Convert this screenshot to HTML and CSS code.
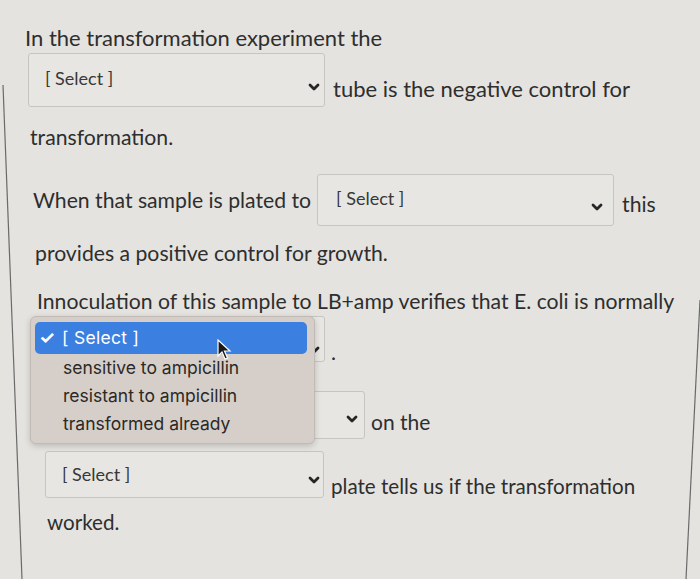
FILE: index.html
```html
<!DOCTYPE html>
<html lang="en">
<head>
    <meta charset="UTF-8">
    <meta name="viewport" content="width=device-width, initial-scale=1.0">
    <title>Transformation Quiz</title>
    <link rel="stylesheet" href="styles.css">
</head>
<body>
    <div class="page">
        <svg class="frame" width="700" height="579" viewBox="0 0 700 579">
            <line x1="3" y1="85" x2="22" y2="579"></line>
            <line x1="700" y1="300" x2="686" y2="579"></line>
        </svg>

        <div class="question">
            <p class="text first">In the transformation experiment the</p>

            <div class="row row-1">
                <div class="select select-1">
                    <span class="label">[ Select ]</span>
                    <svg class="chevron" width="12" height="8" viewBox="0 0 12 8"><polyline points="2,2 6,6 10,2"></polyline></svg>
                </div>
                <span class="text after-1">tube is the negative control for</span>
            </div>

            <p class="text line-2">transformation.</p>

            <div class="row row-2">
                <span class="text">When that sample is plated to</span>
                <div class="select select-2">
                    <span class="label">[ Select ]</span>
                    <svg class="chevron" width="12" height="8" viewBox="0 0 12 8"><polyline points="2,2 6,6 10,2"></polyline></svg>
                </div>
                <span class="text after-2">this</span>
            </div>

            <p class="text line-3">provides a positive control for growth.</p>
            <p class="text line-4">Innoculation of this sample to LB+amp verifies that E. coli is normally</p>

            <div class="row row-3">
                <div class="select-wrap">
                    <!-- the open menu covers this select's label -->
                    <div class="select select-3">
                        <span class="label"></span>
                        <svg class="chevron" width="12" height="8" viewBox="0 0 12 8"><polyline points="2,2 6,6 10,2"></polyline></svg>
                    </div>
                    <div class="menu">
                        <div class="option selected"><span class="check">✓</span>[ Select ]</div>
                        <div class="option">sensitive to ampicillin</div>
                        <div class="option">resistant to ampicillin</div>
                        <div class="option">transformed already</div>
                        <svg class="cursor" width="16" height="22" viewBox="0 0 16 22">
                            <path d="M1 1 L1 17 L5 13 L8 20 L10.5 19 L7.5 12 L13 12 Z"></path>
                        </svg>
                    </div>
                </div>
                <span class="text after-3">.</span>
            </div>

            <div class="row row-4">
                <div class="select select-4">
                    <span class="label"></span>
                    <svg class="chevron" width="12" height="8" viewBox="0 0 12 8"><polyline points="2,2 6,6 10,2"></polyline></svg>
                </div>
                <span class="text after-4">on the</span>
            </div>

            <div class="row row-5">
                <div class="select select-5">
                    <span class="label">[ Select ]</span>
                    <svg class="chevron" width="12" height="8" viewBox="0 0 12 8"><polyline points="2,2 6,6 10,2"></polyline></svg>
                </div>
                <span class="text after-5">plate tells us if the transformation</span>
            </div>

            <p class="text line-6">worked.</p>
        </div>
    </div>
</body>
</html>
```

FILE: styles.css
```css
body {
    margin: 0;
    background-color: #e4e3e0;
    font-family: Lato, "Open Sans", sans-serif;
    color: #2e2e2e;
}
.page {
    position: relative;
    width: 700px;
    height: 579px;
    overflow: hidden;
}
.frame {
    position: absolute;
    top: 0;
    left: 0;
}
.frame line {
    stroke: #6a6a6a;
    stroke-width: 1.2;
}
.question {
    padding: 25px 0 0 25px;
}
.text {
    margin: 0;
    font-size: 21.2px;
    line-height: 26px;
    white-space: nowrap;
}
.first,
.after-1 {
    font-size: 22px;
}
.row {
    display: flex;
    align-items: center;
}

/* inline dropdowns */
.select {
    box-sizing: border-box;
    display: flex;
    justify-content: space-between;
    align-items: flex-start;
    padding: 13px 4px 0 16px;
    background-color: #e7e6e3;
    border: 1px solid #c6c5c1;
    border-radius: 3px;
}
.select .label {
    font-size: 18px;
    line-height: 22px;
    color: #383838;
}
.chevron {
    margin-top: 16px;
}
.chevron polyline {
    fill: none;
    stroke: #262626;
    stroke-width: 2.8;
    stroke-linecap: round;
    stroke-linejoin: round;
}

.row-1 {
    margin: 2px 0 0 3px;
    align-items: flex-end;
}
.select-1 {
    width: 297px;
    height: 54px;
}
.after-1 {
    margin-left: 8px;
    padding-bottom: 5px;
}
.line-2 {
    margin: 17px 0 0 5px;
}
.row-2 {
    margin: 24px 0 0 8px;
}
.select-2 {
    width: 297px;
    height: 52px;
    margin-left: 6px;
    padding: 12px 10px 0 18px;
}
.after-2 {
    margin-left: 8px;
    padding-top: 8px;
}
.line-3 {
    margin: 14px 0 0 10px;
}
.line-4 {
    margin: 22px 0 0 12px;
}
.row-3 {
    margin: 2px 0 0 15px;
    align-items: flex-end;
}
.select-wrap {
    position: relative;
}
.select-3 {
    width: 285px;
    height: 46px;
}
.after-3 {
    margin-left: 6px;
    line-height: 20px;
}
.row-4 {
    margin: 29px 0 0 16px;
    align-items: flex-end;
}
.select-4 {
    width: 324px;
    height: 48px;
    padding-right: 6px;
}
.select-4 .chevron {
    margin-top: 10px;
}
.after-4 {
    margin-left: 6px;
    padding-bottom: 4px;
    font-size: 21px;
}
.row-5 {
    margin: 12px 0 0 20px;
    align-items: flex-end;
}
.select-5 {
    width: 279px;
    height: 47px;
    padding: 11px 3px 0 16px;
}
.select-5 .chevron {
    margin-top: 13px;
}
.after-5 {
    margin-left: 7px;
    font-size: 20.6px;
    line-height: 24px;
}
.line-6 {
    margin: 11px 0 0 22px;
    font-size: 20.6px;
}

/* open native menu */
.menu {
    position: absolute;
    top: 0;
    left: -10px;
    width: 285px;
    height: 128px;
    box-sizing: border-box;
    padding: 5px 7px 0 4px;
    background-color: #d6cfc9;
    border: 1px solid #c2bab4;
    border-radius: 6px;
    box-shadow: 0 2px 6px rgba(0, 0, 0, 0.18);
    font-family: Inter, "Liberation Sans", sans-serif;
    z-index: 5;
}
.option {
    height: 28px;
    line-height: 28px;
    padding-left: 28px;
    font-size: 17.5px;
    color: #2b2826;
}
.option.selected {
    position: relative;
    height: 32px;
    line-height: 32px;
    padding-left: 27px;
    background-color: #3b7fe1;
    border-radius: 5px;
    color: #ffffff;
    font-size: 17.5px;
    letter-spacing: 0.3px;
}
.check {
    position: absolute;
    left: 4px;
    font-size: 18px;
    font-weight: bold;
}
.cursor {
    position: absolute;
    top: 22px;
    left: 186px;
}
.cursor path {
    fill: #1a1a1a;
    stroke: #ffffff;
    stroke-width: 1.2;
}
```
